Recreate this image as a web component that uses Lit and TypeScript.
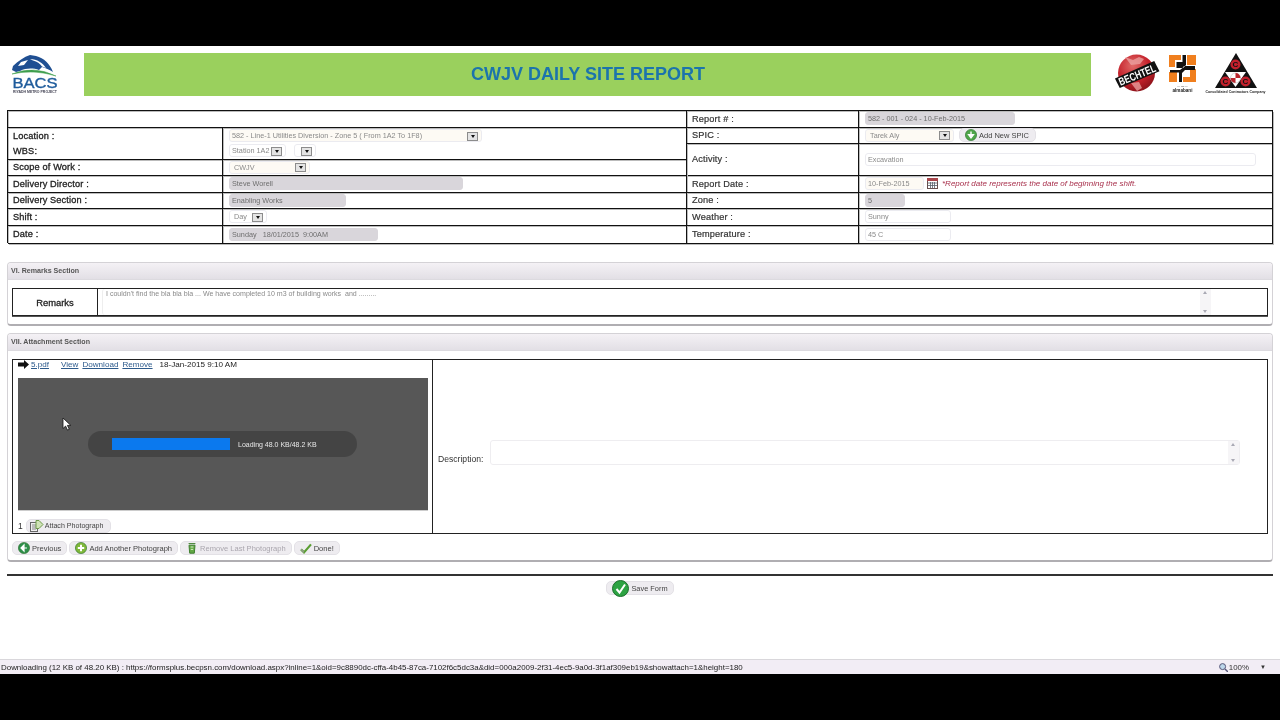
import { LitElement, html, css, svg } from "lit";
import { customElement } from "lit/decorators.js";

const arrow = html`<span class="arrow"><i></i></span>`;

const roundIcon = (c1: string, glyph: any, size = 12) => html`<svg class="ic" width=${size} height=${size} viewBox="0 0 12 12">
  <circle cx="6" cy="6" r="5.6" fill=${c1}/><circle cx="6" cy="6" r="5.6" fill="none" stroke="#2c6e2c" stroke-width=".6"/>${glyph}</svg>`;

const addIcon = roundIcon("#7fb83a", svg`<path d="M6 2.8v6.4M2.8 6h6.4" stroke="#fff" stroke-width="2"/>`);
const downIcon = roundIcon("#4ea64a", svg`<path d="M6 2.6v3.6M3.6 5.6 6 8.8l2.4-3.2z" stroke="#fff" fill="#fff" stroke-width="1.4"/>`);
const backIcon = roundIcon("#2f8f4a", svg`<path d="M9 6H5M6 3 3 6l3 3z" stroke="#fff" fill="#fff" stroke-width="1.2"/>`);
const trashIcon = html`<svg class="ic" width="12" height="12" viewBox="0 0 12 12"><path d="M2.6 1.6h6.8M3 3.2h6l-.7 8H3.7z" fill="#62a845" stroke="#3f7f30"/><path d="M4.6 5h2.8M4.8 7.4h2.4" stroke="#d5eec8"/></svg>`;
const checkIcon = html`<svg class="ic" width="12" height="12" viewBox="0 0 12 12"><path d="M1 7.4 4 10.4 11 2.4" fill="none" stroke="#5a9e32" stroke-width="2.2"/><path d="M1 7.4 4 10.4" stroke="#9a9a9a" stroke-width="1.2" fill="none"/></svg>`;
const attachIcon = html`<svg class="ic" width="14" height="13" viewBox="0 0 14 13"><rect x=".5" y="3.5" width="7" height="9" fill="#eee" stroke="#666"/><path d="M2 6h4M2 8h4M2 10h4" stroke="#888"/><path d="M6 1.5h3l4 4-4 4H6z" fill="#cfe3b6" stroke="#6e9a4a"/></svg>`;

const calendar = html`<svg class="cal" width="11" height="11" viewBox="0 0 11 11"><rect x=".5" y=".5" width="10" height="10" fill="#fff" stroke="#66504f"/><rect x="0" y="0" width="11" height="3" fill="#a8454a"/><path d="M1 5h9M1 7.5h9M3.5 4v6M5.5 4v6M7.5 4v6" stroke="#55606a" stroke-width=".8"/></svg>`;

const scrollbar = html`<span class="sb"><i class="up"></i><i class="down"></i></span>`;

@customElement("app-root")
export class AppRoot extends LitElement {
  static styles = css`
    :host { display: flex; flex-direction: column; width: 1280px; height: 720px; background: #000; overflow: hidden; font-family: "Liberation Sans", Arial, sans-serif; position: relative; }
    .screen { margin-top: 46px; height: 628px; background: #fff; display: flex; flex-direction: column; }
    .main { flex: 1; display: flex; flex-direction: column; min-height: 0; will-change: opacity; }
    header { height: 64px; display: flex; align-items: flex-start; flex: none; }
    .bacs { margin: 8px 0 0 10px; width: 50px; height: 42px; flex: none; }
    .banner { margin: 7px 0 0 24px; width: 1007px; height: 43px; background: rgba(153, 207, 91, .99); display: flex; align-items: center; justify-content: center; color: #1c74ac; font-weight: 700; font-size: 18px; flex: none; padding: 0 0 1px 1px; box-sizing: border-box; }
    .partners { margin: 4px 0 0 20px; width: 160px; height: 50px; flex: none; }

    .grid { margin: 0 7px; display: grid; grid-template-columns: 215px 464px 172px 414px; grid-template-rows: 17px 16px 16px 16px 17px 16px 17px 18px; border-top: 1px solid #111; border-left: 1px solid #111; box-shadow: inset 1px 1px 0 #bbb; flex: none; box-sizing: border-box; width: 1266px; height: 133px; }
    .c { border-right: 1px solid #111; border-bottom: 1px solid #111; box-shadow: 1px 1px 0 #bbb; display: flex; align-items: center; min-width: 0; box-sizing: border-box; padding-bottom: 1px; }
    .lab { padding-left: 5px; font-size: 9.2px; color: #222; -webkit-text-stroke: .3px #222; letter-spacing: .15px; }
    .lab.r { color: #333; -webkit-text-stroke: .2px #333; }
    .val { padding-left: 6px; gap: 5px; }
    .stack { flex-direction: column; align-items: stretch; justify-content: center; }
    .stack > div { flex: 1; display: flex; align-items: center; }
    .stack.val { gap: 0; }
    .span2 { grid-column: span 2; }
    .rs2 { grid-row: span 2; }

    .f { height: 13px; box-sizing: border-box; border: 1px solid #ebebf0; border-radius: 3px; font-size: 7.25px; color: #8a8a8a; display: flex; align-items: center; padding: 0 2px; background: rgba(255, 255, 255, .99); flex: none; position: relative; }
    .f.g { background: rgba(217, 214, 219, .99); border-color: #d9d6db; color: #6e6e6e; }
    .f.y { background: rgba(253, 250, 244, .99); }
    .arrow { width: 11px; height: 9px; border: 1px solid #8c8c8c; background: #e4e4e4; box-sizing: border-box; display: inline-flex; align-items: center; justify-content: center; position: absolute; top: 1.5px; right: 3px; }
    .arrow i { border: 2.5px solid transparent; border-top: 3px solid #111; border-bottom: 0; }
    .w253 { width: 253px; } .w57 { width: 57px; } .w22 { width: 22px; } .w81 { width: 81px; } .w234 { width: 234px; } .w117 { width: 117px; } .w38 { width: 38px; } .w149 { width: 149px; }
    .w150 { width: 150px; } .w89 { width: 89px; } .w391 { width: 391px; } .w59 { width: 59px; } .w40 { width: 40px; } .w86 { width: 86px; }
    .wgap { gap: 8px; }
    .cal { margin-left: -2px; flex: none; }
    .note { font-size: 8px; font-style: italic; color: #a8304c; margin-left: -1px; }

    .btn { display: inline-flex; align-items: center; gap: 2px; height: 12px; padding: 0 6px 0 5px; background: rgba(238, 236, 240, .99); border: 1px solid #e3e1e6; border-radius: 5px; font-size: 7.5px; color: #444; flex: none; white-space: nowrap; box-sizing: content-box; }
    .btn .ic { flex: none; }
    .btn.off { color: #aaa6ae; }

    .panel { margin: 0 7px; border: 1px solid #d4d2d6; border-bottom: 2px solid #b0aeb2; border-radius: 4px; box-sizing: border-box; flex: none; }
    .ph { height: 16px; background: linear-gradient(rgba(244, 241, 245, .99), rgba(226, 223, 229, .99)); border-bottom: 1px solid #dcdadf; font-size: 7.1px; font-weight: 700; color: #555; display: flex; align-items: center; padding-left: 3px; border-radius: 3px 3px 0 0; }
    .remarks { height: 64px; margin-top: 19px; }
    .rt { margin: 8px 4px 0; height: 28px; border: 1px solid #222; box-shadow: 0 1px 0 #555; display: flex; box-sizing: border-box; }
    .rl { width: 84px; border-right: 1px solid #222; display: flex; align-items: center; justify-content: center; font-size: 9.4px; color: #222; -webkit-text-stroke: .3px #222; flex: none; }
    .ta { flex: 1; margin: 0 56px 0 4px; border-left: 1px solid #eee; border-radius: 3px; padding: 0 3px; font-size: 7.05px; color: #8a8a8a; position: relative; line-height: 10px; }
    .sb { position: absolute; right: 0; top: 0; bottom: 0; width: 11px; background: #f6f5f7; }
    .sb i { position: absolute; left: 3px; border: 2.5px solid transparent; }
    .sb .up { top: 2px; border-top: 0; border-bottom: 3px solid #a9a9b4; }
    .sb .down { bottom: 2px; border-bottom: 0; border-top: 3px solid #a9a9b4; }

    .attach { height: 229px; margin-top: 7px; }
    .at { margin: 8px 4px 0; height: 175px; border: 1px solid #222; display: flex; box-sizing: border-box; }
    .al { width: 420px; border-right: 1px solid #222; flex: none; padding: 0 4px 0 5px; box-sizing: border-box; display: flex; flex-direction: column; }
    .file { height: 18px; display: flex; align-items: center; font-size: 8.1px; color: #222; padding-bottom: 10px; box-sizing: border-box; flex: none; }
    .file a { color: #2c5a8c; text-decoration: underline; margin-right: 4px; }
    .file svg { margin-right: 2px; flex: none; }
    .file .gap { margin-right: 12px; }
    .file span { margin-left: 3px; }
    .preview { height: 133px; background: #575757; border-bottom: 1px solid #ccc; display: flex; align-items: center; justify-content: center; flex: none; box-sizing: border-box; width: 410px; }
    .pill { width: 269px; height: 26px; border-radius: 13px; background: rgba(68, 68, 68, .99); display: flex; align-items: center; padding-left: 24px; box-sizing: border-box; gap: 8px; color: #e8e8e8; font-size: 7px; margin-left: -1px; }
    .bar { width: 118px; height: 12px; background: #0b79ee; flex: none; }
    .arow { flex: 1; display: flex; align-items: center; gap: 3px; font-size: 8.5px; color: #333; padding-top: 7px; }
    .arow .btn { font-size: 7.1px; padding: 0 6px 0 3px; gap: 1px; }
    .ar { flex: 1; display: flex; align-items: center; padding: 25px 27px 0 5px; box-sizing: border-box; height: 100%; font-size: 8.6px; color: #333; gap: 7px; }
    .desc { height: 25px; flex: 1; border: 1px solid #eeedf0; border-radius: 3px; position: relative; margin-top: -14px; box-sizing: border-box; }
    .actions { display: flex; gap: 2px; margin: 7px 0 0 4px; }
    .actions .btn { padding: 0 5px; font-size: 7.55px; }
    .rule { margin: 12px 7px 0; height: 2px; background: #333; flex: none; }
    .save { display: flex; justify-content: center; margin-top: 5px; flex: none; }
    .btn.big { height: 12px; padding: 0 5px; gap: 2px; position: relative; font-size: 7.4px; }
    .bigic { margin: -4px 0; flex: none; }

    .status { height: 15px; background: rgba(242, 237, 245, .99); border-top: 1px solid #d9d7db; box-sizing: border-box; display: flex; align-items: center; font-size: 7.93px; color: #222; padding: 0 0 0 1px; flex: none; white-space: nowrap; will-change: opacity; }
    .zoom { margin-left: auto; display: flex; align-items: center; gap: 1px; padding-right: 14px; color: #333; }
    .zoom b { font-weight: 400; font-size: 6px; margin-left: 10px; }
    .cursor { position: absolute; left: 62px; top: 417px; }
  `;

  private header() {
    return html`<header>
      <svg class="bacs" viewBox="0 0 50 42">
        <path d="M3 12C8 7 14 3 20 1l6 1c8 2 14 8 17 16-3-2-7-4-11-5l-3 3c-6-2-13-2-19 1l-4 1-4-2z" fill="#1f4f92"/>
        <path d="M20 5c7 0 13 4 16 9l-4-1.500c-2-3-5-5-9-6zM11 8l7-2-4 5-6 1z" fill="#fff"/>
        <path d="M2 20Q24 11 46 22 24 15 2 20z" fill="#3f9e4d" stroke="#3f9e4d" stroke-width=".5"/>
        <text x="25" y="34" text-anchor="middle" font-size="14" fill="#1f5c9c" stroke="#1f5c9c" stroke-width=".35" font-family="Liberation Sans" textLength="45" lengthAdjust="spacingAndGlyphs">BACS</text>
        <text x="25" y="38.500" text-anchor="middle" font-size="3.6" font-weight="700" fill="#445" font-family="Liberation Sans" textLength="44" lengthAdjust="spacingAndGlyphs">RIYADH METRO PROJECT</text>
      </svg>
      <div class="banner">CWJV DAILY SITE REPORT</div>
      <svg class="partners" viewBox="0 0 160 50">
        <defs><radialGradient id="s" cx=".4" cy=".3" r=".8"><stop offset="0" stop-color="#e06a68"/><stop offset=".55" stop-color="#c4202a"/><stop offset="1" stop-color="#7d0f16"/></radialGradient></defs>
        <circle cx="25.500" cy="23" r="18.500" fill="url(#s)"/>
        <path d="M14 7l8 3 6-3 5 2-4 5-9 1zM20 33l8-1 3 6-5 3z" fill="#eca6a4" opacity=".75"/>
        <g transform="translate(26 24.500) rotate(-22)">
          <path d="M-22-4.500 21-6 22 5.500-21 6z" fill="#111"/>
          <text x="-19.500" y="4.200" font-size="11" font-weight="700" fill="#fff" font-family="Liberation Sans" textLength="39" lengthAdjust="spacingAndGlyphs">BECHTEL</text>
        </g>
        <g transform="translate(58 5)">
          <path d="M0 0H12V5H6V12H0zM18 0H27V10H18zM0 17H8V27H0zM27 27H14V22H21V14H27z" fill="#f07f1e"/>
          <path d="M13.500 0H17V10L14 13 7.500 13V7H13.500zM10 27H13V18L16 15H26V11H15L13.500 13 11 15 1 15V17.500H10z" fill="#111"/>
        </g>
        <text x="71.500" y="37" text-anchor="middle" font-size="3.500" fill="#444" font-family="Noto Sans CJK SC, Liberation Sans">— ـــ —</text>
        <text x="71.500" y="41.500" text-anchor="middle" font-size="4.600" font-weight="700" fill="#222" font-family="Liberation Sans">almabani</text>
        <path d="M125 3 146 38H104z" fill="#111"/>
        <path d="M114 22H135L124.500 37z" fill="#fff"/>
        <circle cx="124.500" cy="28" r="5" fill="#fff" stroke="#999" stroke-width=".4"/><path d="M124.500 23a5 5 0 0 1 5 5h-5zM124.500 33a5 5 0 0 1-5-5h5z" fill="#b8242c"/>
        <g fill="#c2202c"><circle cx="124.500" cy="14.500" r="5"/><circle cx="114.500" cy="31.500" r="5"/><circle cx="134.500" cy="31.500" r="5"/></g>
        <g font-size="8" font-weight="700" fill="#111" text-anchor="middle" font-family="Liberation Sans"><text x="124.500" y="17.300">C</text><text x="114.500" y="34.300">C</text><text x="134.500" y="34.300">C</text></g>
        <text x="124.500" y="42.500" text-anchor="middle" font-size="3.600" font-weight="700" fill="#222" font-family="Liberation Sans" textLength="60" lengthAdjust="spacingAndGlyphs">Consolidated Contractors Company</text>
      </svg>
    </header>`;
  }

  private grid() {
    return html`<div class="grid">
      <div class="c span2"></div>
      <div class="c lab r">Report # :</div>
      <div class="c val"><div class="f g w150">582 - 001 - 024 - 10-Feb-2015</div></div>

      <div class="c lab stack rs2"><div>Location :</div><div>WBS:</div></div>
      <div class="c val stack rs2">
        <div><div class="f y w253">582 - Line-1 Utilities Diversion - Zone 5 ( From 1A2 To 1F8)${arrow}</div></div>
        <div class="wgap"><div class="f w57">Station 1A2${arrow}</div><div class="f w22">${arrow}</div></div>
      </div>
      <div class="c lab r">SPIC :</div>
      <div class="c val"><div class="f y w89">&nbsp;Tarek Aly${arrow}</div><span class="btn">${downIcon}Add New SPIC</span></div>

      <div class="c lab r rs2">Activity :</div>
      <div class="c val rs2"><div class="f w391">Excavation</div></div>

      <div class="c lab">Scope of Work :</div>
      <div class="c val"><div class="f y w81">&nbsp;CWJV${arrow}</div></div>

      <div class="c lab">Delivery Director :</div>
      <div class="c val"><div class="f g w234">Steve Worell</div></div>
      <div class="c lab r">Report Date :</div>
      <div class="c val"><div class="f y w59">10-Feb-2015</div>${calendar}<span class="note">*Report date represents the date of beginning the shift.</span></div>

      <div class="c lab">Delivery Section :</div>
      <div class="c val"><div class="f g w117">Enabling Works</div></div>
      <div class="c lab r">Zone :</div>
      <div class="c val"><div class="f g w40">5</div></div>

      <div class="c lab">Shift :</div>
      <div class="c val"><div class="f w38">&nbsp;Day${arrow}</div></div>
      <div class="c lab r">Weather :</div>
      <div class="c val"><div class="f w86">Sunny</div></div>

      <div class="c lab">Date :</div>
      <div class="c val"><div class="f g w149">Sunday &nbsp; 18/01/2015 &nbsp;9:00AM</div></div>
      <div class="c lab r">Temperature :</div>
      <div class="c val"><div class="f w86">45 C</div></div>
    </div>`;
  }

  render() {
    return html`<div class="screen">
      <div class="main">
        ${this.header()}
        ${this.grid()}
        <section class="panel remarks">
          <div class="ph">VI. Remarks Section</div>
          <div class="rt">
            <div class="rl">Remarks</div>
            <div class="ta">I couldn't find the bla bla bla ... We have completed 10 m3 of building works &nbsp;and .........${scrollbar}</div>
          </div>
        </section>
        <section class="panel attach">
          <div class="ph">VII. Attachment Section</div>
          <div class="at">
            <div class="al">
              <div class="file">
                <svg width="11" height="9" viewBox="0 0 11 9"><path d="M0 2.600h6V0l5 4.500L6 9V6.400H0z" fill="#111"/></svg>
                <a class="gap">5.pdf</a><a>View</a><a>Download</a><a>Remove</a><span>18-Jan-2015 9:10 AM</span>
              </div>
              <div class="preview">
                <div class="pill"><div class="bar"></div>Loading 48.0 KB/48.2 KB</div>
              </div>
              <div class="arow">1 <span class="btn">${attachIcon}Attach Photograph</span></div>
            </div>
            <div class="ar">Description:<div class="desc">${scrollbar}</div></div>
          </div>
          <div class="actions">
            <span class="btn">${backIcon}Previous</span>
            <span class="btn">${addIcon}Add Another Photograph</span>
            <span class="btn off">${trashIcon}Remove Last Photograph</span>
            <span class="btn">${checkIcon}Done!</span>
          </div>
        </section>
        <div class="rule"></div>
        <div class="save"><span class="btn big"><svg class="bigic" width="17" height="17" viewBox="0 0 17 17"><circle cx="8.500" cy="8.500" r="8" fill="#2da343" stroke="#1c6e2c"/><path d="M4.500 9 7.500 12.500 13 4.500" fill="none" stroke="#fff" stroke-width="2"/></svg>Save Form</span></div>
      </div>
      <div class="status">
        Downloading (12 KB of 48.20 KB) : https://formsplus.becpsn.com/download.aspx?inline=1&oid=9c8890dc-cffa-4b45-87ca-7102f6c5dc3a&did=000a2009-2f31-4ec5-9a0d-3f1af309eb19&showattach=1&height=180
        <span class="zoom"><svg width="9" height="9" viewBox="0 0 9 9"><circle cx="3.600" cy="3.600" r="3" fill="#bcd6ea" stroke="#557"/><path d="M6 6l3 3" stroke="#557" stroke-width="1.400"/></svg>100%<b>▼</b></span>
      </div>
    </div>
    <svg class="cursor" width="10" height="14" viewBox="0 0 10 14"><path d="M1 1v10.500l2.600-2.400 1.900 4 1.800-.8-1.900-3.900h3.400z" fill="#fff" stroke="#111" stroke-width=".8"/></svg>`;
  }
}
